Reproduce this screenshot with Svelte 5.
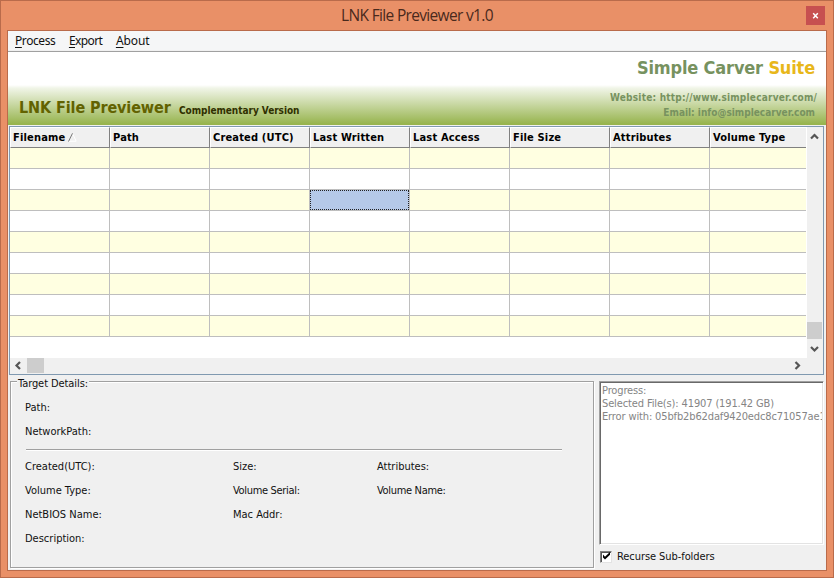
<script>
  const menus = ['Process', 'Export', 'About'];
  const columns = [
    'Filename', 'Path', 'Created (UTC)', 'Last Written',
    'Last Access', 'File Size', 'Attributes', 'Volume Type'
  ];
  const rows = Array.from({ length: 9 }, (_, i) => i);
  const selected = { row: 2, col: 3 };
  const details = [
    ['Created(UTC):', 'Size:', 'Attributes:'],
    ['Volume Type:', 'Volume Serial:', 'Volume Name:'],
    ['NetBIOS Name:', 'Mac Addr:', ''],
    ['Description:', '', '']
  ];
</script>

<div class="window">
  <header class="titlebar">
    <span class="title">LNK File Previewer v1.0</span>
    <button class="close" aria-label="Close">
      <svg width="19" height="19" viewBox="0 0 19 19"><path d="M7.2 7.2L11.8 12.2M11.8 7.2L7.2 12.2" stroke="#fff" stroke-width="1.5" /></svg>
    </button>
  </header>
  <main class="client">
    <nav class="menu">
      {#each menus as m}
        <span class="item"><u>{m[0]}</u>{m.slice(1)}</span>
      {/each}
    </nav>
    <section class="banner">
      <div class="product"><span class="name">LNK File Previewer</span><span class="edition">Complementary Version</span></div>
      <div class="brand">
        <div class="suite">Simple Carver <b>Suite</b></div>
        <div class="site">Website: http://www.simplecarver.com/</div>
        <div class="mail">Email: info@simplecarver.com</div>
      </div>
    </section>
    <section class="grid">
      <div class="upper">
        <div class="table">
          <div class="row head">
            {#each columns as c, i}
              <div class="cell"><span>{c}</span>
                {#if i === 0}
                  <svg width="9" height="9" viewBox="0 0 9 9"><path d="M4.5 .5L8.2 8.2H.5" stroke="#fff" fill="none" /><path d="M.5 8.5L4.5 .3" stroke="#777" fill="none" /></svg>
                {/if}
              </div>
            {/each}
          </div>
          {#each rows as r}
            <div class="row" class:odd={r % 2 === 0}>
              {#each columns as _, c}
                <div class="cell">
                  {#if r === selected.row && c === selected.col}<div class="selected"></div>{/if}
                </div>
              {/each}
            </div>
          {/each}
        </div>
        <div class="vscroll">
          <svg width="15" height="19" viewBox="0 0 15 19"><path d="M4 11.5L7.5 8L11 11.5" /></svg>
          <div class="track"></div>
          <div class="thumb"></div>
          <svg width="15" height="19" viewBox="0 0 15 19"><path d="M4 8L7.5 11.5L11 8" /></svg>
        </div>
      </div>
      <div class="hscroll">
        <svg width="17" height="16" viewBox="0 0 17 16"><path d="M10 4L6.5 7.5L10 11" /></svg>
        <div class="thumb"></div>
        <div class="track"></div>
        <svg width="17" height="16" viewBox="0 0 17 16"><path d="M6.5 4L10 7.5L6.5 11" /></svg>
      </div>
    </section>
    <section class="bottom">
      <div class="group">
        <div class="legend">Target Details:</div>
        <div class="line">Path:</div>
        <div class="line">NetworkPath:</div>
        <div class="rule"></div>
        {#each details as d}
          <div class="line trio">
            {#each d as t, i}<span class:tight={i > 0 && t.startsWith('Volume')}>{t}</span>{/each}
          </div>
        {/each}
      </div>
      <div class="side">
        <div class="log">
          <div>Progress:</div>
          <div>Selected File(s): 41907 (191.42 GB)</div>
          <div>Error with: 05bfb2b62daf9420edc8c71057ae1</div>
        </div>
        <div class="check">
          <span class="box"><svg width="9" height="9" viewBox="0 0 9 9"><path d="M1 2.5V5.5L3 7.5L8 2.8V0L3 4.7Z" fill="#000" /></svg></span>
          <span>Recurse Sub-folders</span>
        </div>
      </div>
    </section>
  </main>
</div>

<style>
  .window { box-sizing: border-box; width: 834px; height: 578px; background: #e99067; border: 1px solid #b96b4b; padding: 0 6px 6px; overflow: hidden; font-family: 'DejaVu Sans Condensed', 'DejaVu Sans', sans-serif; font-stretch: condensed; font-size: 11px; color: #111; white-space: nowrap; display: flex; flex-direction: column; }
  .titlebar { height: 29px; flex: none; display: flex; align-items: flex-start; padding-left: 21px; }
  .title { flex: 1; text-align: center; font: 15.5px/29px 'Open Sans', sans-serif; letter-spacing: -.67px; color: #49291c; }
  .close { border: 0; padding: 0; width: 19px; height: 19px; margin: 5px 2px 0 0; background: #c75050; display: block; }
  .close svg { display: block; }
  .client { box-sizing: border-box; width: 820px; height: 541px; border: 1px solid #b96b4b; background: #f0f0f0; display: flex; flex-direction: column; }
  .menu { height: 20px; flex: none; box-sizing: border-box; background: #f5f6f7; border-bottom: 1px solid #f0f0f0; display: flex; gap: 13.6px; padding-left: 7px; font: 12px/20px 'Noto Sans', sans-serif; letter-spacing: -.42px; }
  .item:nth-child(2) { letter-spacing: -.6px; }
  .item:nth-child(3) { letter-spacing: -.1px; }
  .menu u { text-underline-offset: 2px; }
  .banner { height: 74px; flex: none; box-sizing: border-box; border-top: 1px solid #a0a0a0; background: linear-gradient(#fff 0 33px, #f1f5e8 36px, #97b44e 72px, #97b44e); display: flex; justify-content: space-between; font-weight: bold; }
  .product { padding: 44px 0 0 11px; display: flex; height: 24px; line-height: 24px; }
  .name { font-size: 16px; color: #626200; width: 160px; letter-spacing: -.1px; }
  .edition { font-size: 10px; padding-top: 3px; color: #303000; letter-spacing: -.05px; }
  .brand { text-align: right; padding: 3px 11px 0 0; color: #77925f; }
  .suite { font-size: 18px; line-height: 26px; letter-spacing: -.17px; }
  .suite b { color: #e8b71b; }
  .site { font-size: 10px; line-height: 15px; margin: 9px -2px 0 0; letter-spacing: .22px; }
  .mail { font-size: 10px; line-height: 15px; }
  .grid { height: 249px; width: 815px; flex: none; box-sizing: border-box; margin: 1px 0 0 1px; border: 1px solid #8099b0; background: #f0f0f0; }
  .upper { display: flex; height: 231px; }
  .table { width: 796px; overflow: hidden; background: #fff; border-right: 1px solid #fff; }
  .row { display: flex; width: 800px; height: 21px; }
  .cell { box-sizing: border-box; width: 100px; height: 21px; flex: none; border-right: 1px solid #bebebe; border-bottom: 1px solid #bebebe; }
  .odd { background: #ffffe1; }
  .head { background: #f0f0f0; }
  .head .cell { border-color: #808080; border-top: 1px solid #fff; border-left: 1px solid #fff; font-weight: bold; line-height: 19px; padding-left: 2px; display: flex; align-items: center; gap: 3px; color: #000; letter-spacing: .17px; }
  .selected { box-sizing: border-box; height: 20px; background: #b5c9e8; border: 1px dotted #222; }
  .vscroll { width: 15px; background: #f0f0f0; display: flex; flex-direction: column; }
  .track { flex: 1; }
  .thumb { background: #cdcdcd; }
  .vscroll .thumb { height: 17px; }
  .hscroll .thumb { width: 17px; height: 15px; }
  .hscroll { display: flex; height: 16px; width: 796px; }
  .vscroll path, .hscroll path { fill: none; stroke: #555; stroke-width: 2.2; }
  .bottom { flex: 1; display: flex; padding: 6px 0 0 2px; }
  .group { box-sizing: border-box; width: 584px; height: 187px; border: 1px solid #a0a0a0; box-shadow: 1px 1px #fff, inset 1px 1px #fff; }
  .legend { width: 72px; height: 14px; line-height: 14px; margin: -5px 0 0 6px; padding-left: 1px; background: #f0f0f0; box-sizing: border-box; position: relative; letter-spacing: -.08px; }
  .line { height: 24px; line-height: 24px; padding-left: 14px; }
  .legend + .line { margin-top: 5px; }
  .rule { height: 1px; width: 536px; background: #a0a0a0; box-shadow: 0 1px #fff; margin: 5px 0 5px 15px; }
  .trio { display: grid; grid-template-columns: 208px 144px 144px; }
  .tight { letter-spacing: -.32px; }
  .side { margin-left: 5px; width: 225px; }
  .log { box-sizing: border-box; width: 225px; height: 164px; border: 1px solid #a0a0a0; border-right-color: #fff; border-bottom-color: #fff; box-shadow: inset 1px 1px #696969, inset -1px -1px #e3e3e3; background: #fff; padding: 2px 1px 0 2px; line-height: 13px; color: #858585; overflow: hidden; letter-spacing: -.13px; }
  .log div { overflow: hidden; }
  .check { display: flex; align-items: center; height: 15px; margin: 4px 0 0 1px; gap: 5px; letter-spacing: -.07px; }
  .box { box-sizing: border-box; width: 12px; height: 12px; background: #fff; border: 1px solid #808080; border-right-color: #e3e3e3; border-bottom-color: #e3e3e3; box-shadow: inset 1px 1px #555; display: flex; align-items: center; justify-content: center; }
</style>
